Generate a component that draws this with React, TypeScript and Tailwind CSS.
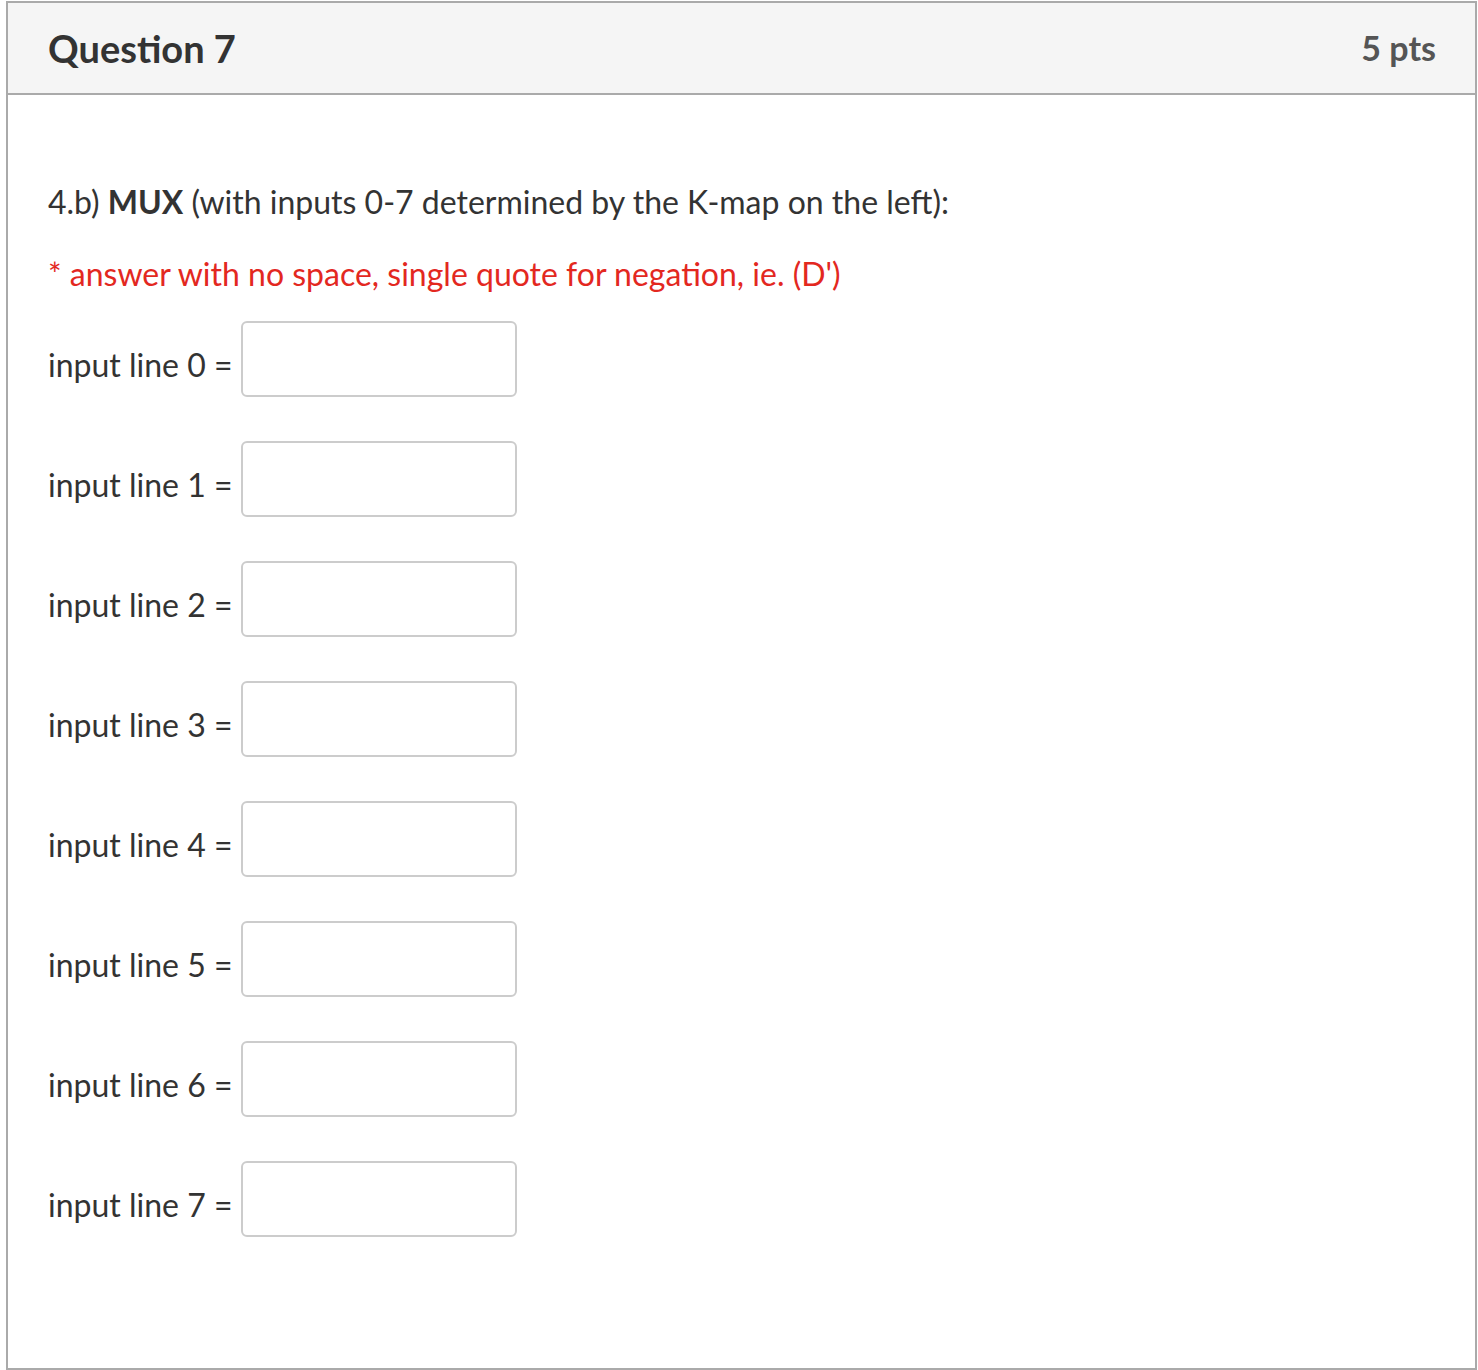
export default function App() {
  const lines = [0, 1, 2, 3, 4, 5, 6, 7];

  return (
    <div className="w-[1478px] h-[1370px] bg-white pt-[1px] pl-[6px] font-['Lato','Liberation_Sans',sans-serif]">
      <div className="w-[1471px] h-[1369px] border-2 border-[#aaaaaa] flex flex-col">
        {/* header */}
        <div className="h-[92px] bg-[#f5f5f5] border-b-2 border-[#aaaaaa] flex items-center justify-between pl-[40px] pr-[39px]">
          <h2 className="text-[38px] font-bold text-[#333333] leading-none">Question 7</h2>
          <span className="text-[34px] font-bold text-[#555555] leading-none">5 pts</span>
        </div>

        {/* body */}
        <div className="px-[40px] pt-[84px] text-[32px] leading-[45px] text-[#333333]">
          <p>
            4.b) <strong className="font-bold">MUX</strong> (with inputs 0-7 determined by the K-map on the left):
          </p>
          <p className="mt-[27px] text-[#e3281f]">* answer with no space, single quote for negation, ie. (D')</p>

          <div className="mt-[25px] flex flex-col gap-[44px]">
            {lines.map((n) => (
              <div key={n} className="flex items-end gap-[9px]">
                <span className="pb-[10px]">input line {n} =</span>
                <input
                  type="text"
                  className="w-[276px] h-[76px] border-2 border-[#cccccc] rounded-[6px] bg-white"
                />
              </div>
            ))}
          </div>
        </div>
      </div>
    </div>
  );
}
